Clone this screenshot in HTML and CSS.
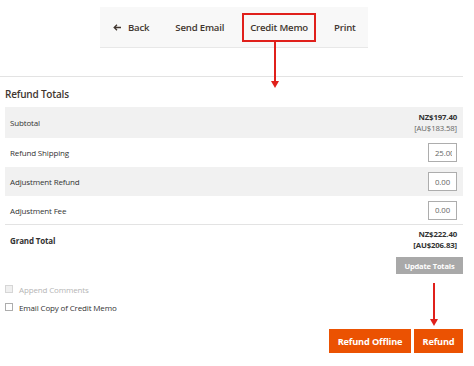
FILE: index.html
```html
<!DOCTYPE html>
<html lang="en">
<head>
  <meta charset="UTF-8" />
  <title>Credit Memo – Refund Totals</title>
  <link rel="stylesheet" href="styles.css">
</head>
<body>
  <div class="page">
    <nav class="toolbar">
      <a class="tool">
        <svg class="arrow-left" width="8" height="7" viewBox="0 0 8 7">
          <path d="M8 3.5H1.5M4 0.8L1.2 3.5 4 6.2" fill="none" stroke="#41362f" stroke-width="1.3"/>
        </svg>
        Back
      </a>
      <a class="tool">Send Email</a>
      <a class="tool marked">Credit Memo</a>
      <a class="tool">Print</a>
    </nav>

    <section class="totals">
      <h2>Refund Totals</h2>
      <div class="rows">
        <div class="row shade">
          <span class="label">Subtotal</span>
          <span class="amount"><strong>NZ$197.40</strong><br>[AU$183.58]</span>
        </div>
        <div class="row">
          <span class="label">Refund Shipping</span>
          <input class="num" type="text" value="25.00">
        </div>
        <div class="row shade">
          <span class="label">Adjustment Refund</span>
          <input class="num" type="text" value="0.00">
        </div>
        <div class="row last">
          <span class="label">Adjustment Fee</span>
          <input class="num" type="text" value="0.00">
        </div>
        <div class="row grand">
          <span class="label">Grand Total</span>
          <span class="amount">NZ$222.40<br>[AU$206.83]</span>
        </div>
      </div>
      <div class="update-wrap">
        <button class="btn-grey">Update Totals</button>
      </div>

      <label class="check disabled"><span class="box"></span>Append Comments</label>
      <label class="check"><span class="box"></span>Email Copy of Credit Memo</label>

      <div class="actions">
        <button class="btn-orange">Refund Offline</button>
        <button class="btn-orange">Refund</button>
      </div>
    </section>

    <!-- annotation arrows -->
    <svg class="pointer pointer-top" width="10" height="48" viewBox="0 0 10 48">
      <line x1="5" y1="0" x2="5" y2="41" stroke="#e0201b" stroke-width="2"/>
      <polygon points="1,40 9,40 5,47" fill="#e0201b"/>
    </svg>
    <svg class="pointer pointer-bottom" width="10" height="44" viewBox="0 0 10 44">
      <line x1="5" y1="0" x2="5" y2="37" stroke="#e0201b" stroke-width="2"/>
      <polygon points="1,36 9,36 5,43" fill="#e0201b"/>
    </svg>
  </div>
</body>
</html>
```

FILE: styles.css
```css
* {
  box-sizing: border-box;
  margin: 0;
  padding: 0;
}
body {
  font-family: 'Open Sans', sans-serif;
  color: #333;
  background: white;
}
.page {
  position: relative;
  width: 474px;
  height: 366px;
  overflow: hidden;
}
.toolbar {
  display: flex;
  align-items: center;
  gap: 12px;
  margin: 7px 0 0 100px;
  width: 268px;
  height: 41px;
  padding-left: 6px;
  background: #f8f8f8;
  border-bottom: 1px solid #e8e8e8;
}
.tool {
  display: flex;
  align-items: center;
  height: 27px;
  padding: 0 7px;
  font-size: 9.6px;
  font-weight: 600;
  letter-spacing: -0.2px;
  color: #41362f;
  white-space: nowrap;
}
.arrow-left {
  margin-right: 7px;
}
.tool.marked {
  outline: 2px solid #e0201b;
  outline-offset: -1px;
}
.totals {
  margin-top: 28px;
  width: 463px;
  border-top: 1px solid #e3e3e3;
  padding: 9px 0 0 5px;
}
.totals h2 {
  font-size: 10px;
  font-weight: 600;
  letter-spacing: -0.2px;
  color: #41362f;
  line-height: 16px;
  margin-bottom: 5px;
}
.row {
  display: flex;
  justify-content: space-between;
  align-items: center;
  height: 29px;
  padding: 0 6px 0 5px;
  font-size: 8px;
  letter-spacing: -0.15px;
}
.row.shade {
  background: #f1f1f1;
}
.rows .row:first-child {
  height: 31px;
}
.row.last {
  border-bottom: 1px solid #e3e3e3;
}
.row.grand {
  height: 30px;
  font-weight: 700;
}
.amount {
  text-align: right;
  font-size: 7.8px;
  line-height: 11px;
  color: #666;
}
.amount strong {
  color: #333;
}
.grand .amount {
  color: #333;
}
.num {
  width: 29px;
  height: 19px;
  border: 1px solid #adadad;
  background: white;
  font-family: inherit;
  font-size: 7.8px;
  letter-spacing: -0.1px;
  color: #666;
  padding: 0 4px 0 6px;
}
.update-wrap {
  display: flex;
  justify-content: flex-end;
  margin-top: 2px;
}
.btn-grey {
  width: 67px;
  height: 17px;
  border: none;
  background: #a9a9a9;
  color: white;
  font-family: inherit;
  font-size: 7.5px;
  letter-spacing: -0.15px;
  font-weight: 700;
}
.check {
  display: flex;
  align-items: center;
  gap: 6px;
  font-size: 8px;
  letter-spacing: -0.15px;
  color: #333;
  height: 18px;
}
.check:first-of-type {
  margin-top: 6px;
}
.check .box {
  width: 8px;
  height: 8px;
  border: 1px solid #adadad;
  background: white;
}
.check.disabled {
  color: #b5b5b5;
}
.check.disabled .box {
  border-color: #d6d6d6;
  background: #f0f0f0;
}
.actions {
  display: flex;
  justify-content: flex-end;
  gap: 3px;
  margin-top: 13px;
}
.btn-orange {
  height: 24px;
  border: none;
  background: #eb5202;
  color: white;
  font-family: inherit;
  font-size: 9.2px;
  letter-spacing: -0.15px;
  font-weight: 700;
}
.actions .btn-orange:first-child {
  width: 82px;
}
.actions .btn-orange:last-child {
  width: 49px;
}
.pointer {
  position: absolute;
}
.pointer-top {
  left: 270px;
  top: 41px;
}
.pointer-bottom {
  left: 429px;
  top: 283px;
}
```
